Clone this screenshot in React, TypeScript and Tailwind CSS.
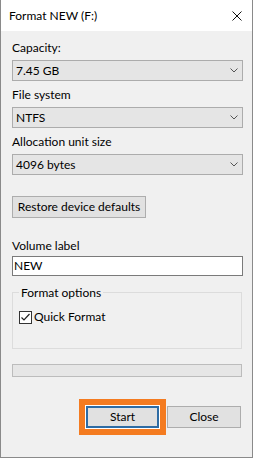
import { ReactNode } from "react";

const font = { fontFamily: "Lato, 'Noto Sans', sans-serif" };

function Chevron() {
  return (
    <svg width="8" height="5" viewBox="0 0 8 5" className="shrink-0">
      <polyline points="0.5,0.5 4,4 7.5,0.5" fill="none" stroke="#555" strokeWidth="1" />
    </svg>
  );
}

function Select({ value }: { value: string }) {
  return (
    <div className="flex h-[21px] w-[231px] items-center justify-between border border-[#acacac] bg-[#e5e5e5] pl-[3px] pr-[4px]">
      <span className="leading-[16px]">{value}</span>
      <Chevron />
    </div>
  );
}

function Label({ children, className = "" }: { children: ReactNode; className?: string }) {
  return <div className={`h-[16px] leading-[16px] ${className}`}>{children}</div>;
}

export default function App() {
  return (
    <div
      style={font}
      className="flex h-[458px] w-[253px] flex-col border-x border-b border-[#8a8a8a] bg-[#f0f0f0] text-[12px] text-black"
    >
      <div className="flex h-[31px] shrink-0 items-center justify-between bg-white pl-[8px] pr-[10px]">
        <span className="leading-[16px]">Format NEW (F:)</span>
        <svg width="10" height="10" viewBox="0 0 10 10">
          <path d="M0.5 0.5 L9.5 9.5 M9.5 0.5 L0.5 9.5" stroke="#111" strokeWidth="1" />
        </svg>
      </div>

      <div className="flex flex-col pl-[11px]">
        <Label className="mt-[9px]">Capacity:</Label>
        <div className="mt-[4px]">
          <Select value="7.45 GB" />
        </div>

        <Label className="mt-[6px]">File system</Label>
        <div className="mt-[4px]">
          <Select value="NTFS" />
        </div>

        <Label className="mt-[6px]">Allocation unit size</Label>
        <div className="mt-[4px]">
          <Select value="4096 bytes" />
        </div>

        <div className="mt-[21px] flex h-[22px] w-[134px] items-center justify-center border border-[#adadad] bg-[#e1e1e1]">
          Restore device defaults
        </div>

        <Label className="mt-[20px]">Volume label</Label>
        <div className="mt-[2px] flex h-[20px] w-[231px] items-center border border-[#7a7a7a] bg-white pl-[1px]">
          NEW
        </div>

        <div className="relative mt-[16px] h-[57px] w-[230px] border border-[#dcdcdc]">
          <span className="absolute left-[6px] top-[-8px] bg-[#f0f0f0] px-[2px] leading-[16px]">Format options</span>
          <div className="ml-[6px] mt-[16px] flex items-center gap-[2px]">
            <div className="flex h-[13px] w-[13px] items-center justify-center border border-[#333] bg-white">
              <svg width="11" height="11" viewBox="0 0 11 11">
                <polyline points="1.5,5.5 4,8 9.5,2" fill="none" stroke="#222" strokeWidth="1.2" />
              </svg>
            </div>
            <span className="leading-[16px]">Quick Format</span>
          </div>
        </div>

        <div className="mt-[15px] h-[13px] w-[230px] border border-[#bcbcbc] bg-[#e6e6e6]" />

        <div className="ml-[67px] mt-[22px] flex items-center gap-[1px]">
          <div className="border-[6px] border-[#f47b20] bg-white p-[1px]">
            <div className="flex h-[22px] w-[73px] items-center justify-center border-2 border-[#2e6ca4] bg-[#e1e1e1]">
              Start
            </div>
          </div>
          <div className="flex h-[22px] w-[74px] items-center justify-center border border-[#adadad] bg-[#e1e1e1]">
            Close
          </div>
        </div>
      </div>
    </div>
  );
}
